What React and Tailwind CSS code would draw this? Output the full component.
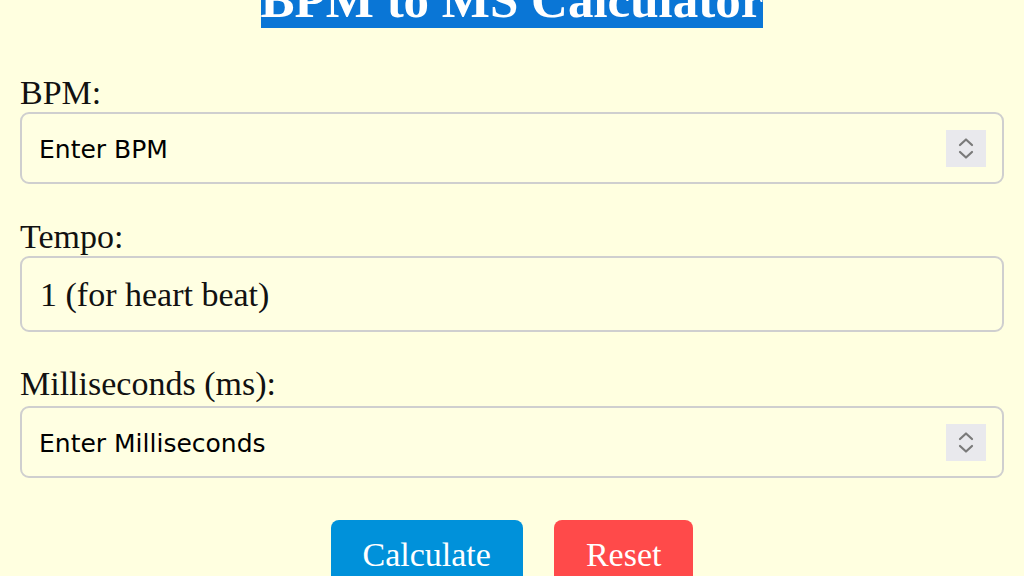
import React from "react";

function Spinner() {
  return (
    <div className="flex h-[37px] w-[40px] flex-col items-center justify-center gap-[3px] bg-[#e9e9ed]">
      <svg width="16" height="10" viewBox="0 0 16 10" fill="none">
        <path d="M2 8 L8 2.5 L14 8" stroke="#7a7a7a" strokeWidth="2.2" strokeLinecap="round" strokeLinejoin="round" />
      </svg>
      <svg width="16" height="10" viewBox="0 0 16 10" fill="none">
        <path d="M2 2 L8 7.5 L14 2" stroke="#7a7a7a" strokeWidth="2.2" strokeLinecap="round" strokeLinejoin="round" />
      </svg>
    </div>
  );
}

function NumberField({ placeholder }) {
  return (
    <div className="flex h-[72px] items-center rounded-[9px] border-2 border-[#cfcfcf] bg-[#ffffe2] pl-[17px] pr-[16px]">
      <input
        type="text"
        placeholder={placeholder}
        className="mt-[4px] min-w-0 flex-1 bg-transparent text-[25px] text-black outline-none placeholder:text-black"
        style={{ fontFamily: '"DejaVu Sans", Verdana, sans-serif' }}
      />
      <Spinner />
    </div>
  );
}

export default function App() {
  const serif = { fontFamily: '"Liberation Serif", "Times New Roman", serif' };
  return (
    <div className="min-h-[576px] w-full overflow-hidden bg-[#ffffe0]" style={serif}>
      <div className="px-5">
        <h1 className="mt-[-28px] text-center text-[51px] font-bold leading-[56px]">
          <span className="bg-[#0a76d6] text-white">BPM to MS Calculator</span>
        </h1>

        <label className="mt-[46px] block text-[34px] leading-[37px] text-[#111]">BPM:</label>
        <div className="mt-[1px]">
          <NumberField placeholder="Enter BPM" />
        </div>

        <label className="mt-[34px] block text-[34px] leading-[37px] text-[#111]">Tempo:</label>
        <div className="mt-[1px] flex h-[76px] items-center rounded-[9px] border-2 border-[#cfcfcf] bg-[#ffffe2] pl-[18px] text-[34px] text-[#111]">
          1 (for heart beat)
        </div>

        <label className="mt-[33px] block text-[34px] leading-[37px] text-[#111]">Milliseconds (ms):</label>
        <div className="mt-[4px]">
          <NumberField placeholder="Enter Milliseconds" />
        </div>

        <div className="mt-[42px] flex justify-center gap-[31px]">
          <button className="rounded-[8px] bg-[#0091da] px-8 pb-[12px] pt-[16px] text-[34px] leading-[38px] text-white">
            Calculate
          </button>
          <button className="rounded-[8px] bg-[#ff4a4a] px-8 pb-[12px] pt-[16px] text-[34px] leading-[38px] text-white">
            Reset
          </button>
        </div>
      </div>
    </div>
  );
}
